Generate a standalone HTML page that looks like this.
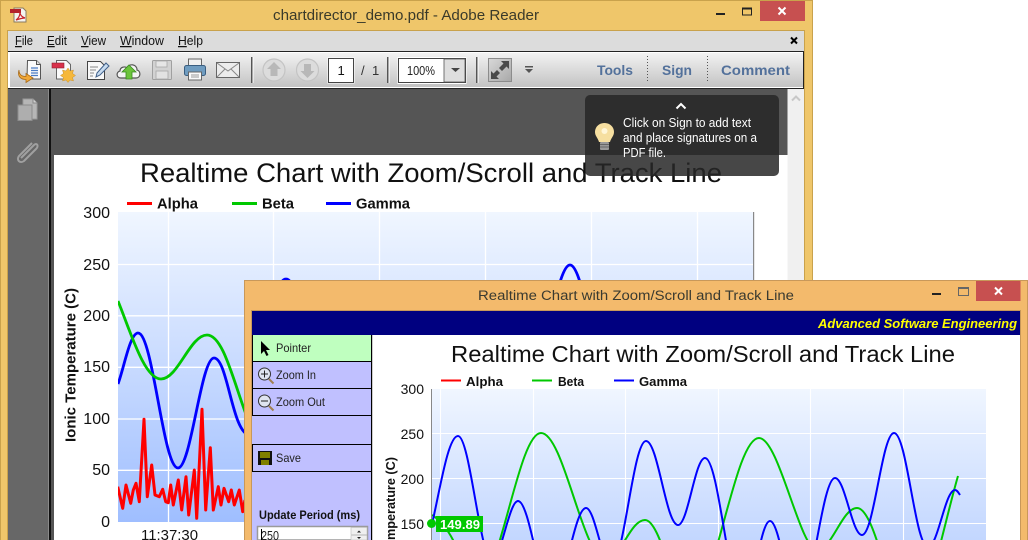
<!DOCTYPE html>
<html><head><meta charset="utf-8"><style>
html,body{margin:0;padding:0;background:#fff;width:1028px;height:540px;overflow:hidden}
svg{display:block;overflow:hidden}
text{font-family:"Liberation Sans",sans-serif;white-space:pre}
.b{font-weight:bold}
.n{text-anchor:end;font-size:16px;fill:#111}
.m{text-anchor:end;font-size:14px;fill:#111}
.ui{font-size:12.5px;fill:#111}
.tip{font-size:12.5px;fill:#fff}
</style></head><body>
<svg width="1028" height="540" viewBox="0 0 1028 540" xmlns="http://www.w3.org/2000/svg">
<defs>
<linearGradient id="tb" x1="0" y1="0" x2="0" y2="1"><stop offset="0" stop-color="#f2f2f2"/><stop offset="1" stop-color="#c3c3c3"/></linearGradient>
<linearGradient id="ex" x1="0" y1="0" x2="1" y2="1"><stop offset="0" stop-color="#d8d8d8"/><stop offset="1" stop-color="#a8a8a8"/></linearGradient>
<linearGradient id="g1" gradientUnits="userSpaceOnUse" x1="0" y1="212" x2="0" y2="522"><stop offset="0" stop-color="#f0f6ff"/><stop offset="1" stop-color="#9fbeff"/></linearGradient>
<linearGradient id="g2" gradientUnits="userSpaceOnUse" x1="0" y1="389" x2="0" y2="659"><stop offset="0" stop-color="#f0f6ff"/><stop offset="1" stop-color="#9fbeff"/></linearGradient>
<clipPath id="c1"><rect x="118" y="212" width="636" height="310"/></clipPath>
<clipPath id="c2"><rect x="432" y="389" width="554" height="151"/></clipPath>
</defs>
<rect width="1028" height="540" fill="#fff"/>

<!-- back window -->
<rect x="0" y="0" width="812.5" height="540" fill="#efc66a"/>
<rect x="0" y="0" width="812.5" height="1" fill="#c9a24c"/>
<rect x="0" y="0" width="1" height="540" fill="#c9a24c"/>
<rect x="812" y="0" width="1" height="280" fill="#c9a24c"/>
<text x="273" y="20" font-size="14.5" fill="#3a3a2a" textLength="266" lengthAdjust="spacingAndGlyphs">chartdirector_demo.pdf - Adobe Reader</text>
<!-- pdf icon -->
<path d="M14 8h9l3 3v11H14z" fill="#f4f4f0" stroke="#8a7a60" stroke-width="1"/>
<rect x="10" y="9" width="11" height="4" fill="#b3222a"/>
<path d="M16 20c3-2 4-5 4-8 0 3 2 5 5 6-3 0-6 1-9 2z" fill="none" stroke="#c8202a" stroke-width="1.2"/>
<!-- controls -->
<rect x="716" y="13" width="9" height="2" fill="#222"/>
<rect x="742.500" y="8.500" width="9" height="6.500" fill="none" stroke="#222" stroke-width="1"/>
<rect x="742" y="7.500" width="10" height="2" fill="#222"/>
<rect x="760" y="1" width="45" height="20" fill="#c75050"/>
<path d="M778.500 7.500l7 7M785.500 7.500l-7 7" stroke="#fff" stroke-width="2"/>

<!-- client -->
<rect x="8" y="30" width="796" height="510" fill="#555"/>
<rect x="7" y="30" width="798" height="1" fill="#c9a24c"/>
<rect x="7" y="30" width="1" height="510" fill="#c9a24c"/>
<rect x="804" y="30" width="1" height="250" fill="#c9a24c"/>
<rect x="8" y="31" width="796" height="20" fill="#dcdcdc"/>
<g class="ui">
<text x="15" y="45" class="ui" textLength="18" lengthAdjust="spacingAndGlyphs"><tspan text-decoration="underline">F</tspan>ile</text>
<text x="47" y="45" class="ui" textLength="20" lengthAdjust="spacingAndGlyphs"><tspan text-decoration="underline">E</tspan>dit</text>
<text x="81" y="45" class="ui" textLength="25" lengthAdjust="spacingAndGlyphs"><tspan text-decoration="underline">V</tspan>iew</text>
<text x="120" y="45" class="ui" textLength="44" lengthAdjust="spacingAndGlyphs"><tspan text-decoration="underline">W</tspan>indow</text>
<text x="178" y="45" class="ui" textLength="25" lengthAdjust="spacingAndGlyphs"><tspan text-decoration="underline">H</tspan>elp</text>
</g>
<path d="M791 37.500l6 6M797 37.500l-6 6" stroke="#000" stroke-width="2"/>

<!-- toolbar -->
<rect x="8" y="51" width="796" height="38" fill="#222"/>
<rect x="8" y="52" width="795" height="36" fill="#fff"/>
<rect x="10" y="53" width="793" height="34" fill="url(#tb)"/>

<!-- icon 1 -->
<path d="M27.500 60.500h9l4 4v14.500h-13.500z" fill="#fafafa" stroke="#555"/>
<path d="M36.500 60.500v4h4" fill="#ddd" stroke="#555"/>
<path d="M31 68h7M31 70.500h7M31 73h7M31 75.500h7" stroke="#4a7cc4" stroke-width="1.200"/>
<path d="M19 70c0 5 3 6.500 7 6.500v-3l7 4.500-7 4.500v-3c-5 0-9-3-7-9.500z" fill="#f0a838" stroke="#a86a18" stroke-width=".8"/>
<!-- icon 2 -->
<path d="M56.500 60.500h10l4 4v14.500H56.500z" fill="#fafafa" stroke="#666"/>
<rect x="52" y="63" width="12" height="5" fill="#d8304a" stroke="#902030" stroke-width=".6"/>
<path d="M68 68l2 3 3.500-1-1 3.500 3 2-3 2 1 3.500-3.500-1-2 2.500-2-2.500-3.500 1 1-3.500-3-2 3-2-1-3.500 3.500 1z" fill="#f6b83a" stroke="#c89030" stroke-width=".5"/>
<!-- icon 3 -->
<path d="M87.500 61.500h13l4 4v14h-17z" fill="#f8f8f8" stroke="#444"/>
<path d="M90 67h8M90 70h6M90 73h4M90 76h3" stroke="#888"/>
<path d="M96 77l1-4 9-10 3 3-9 9z" fill="#c8dcf0" stroke="#40608a" stroke-width="1"/>
<!-- icon 4 -->
<path d="M121 78c-5 0-5-6-1-7 0-4 5-5 7-3 2-5 10-4 10 2 4 1 4 8-1 8z" fill="#f4f4f4" stroke="#555" stroke-width="1.200"/>
<path d="M129 65l7 7h-4v7h-6v-7h-4z" fill="#6cc43c" stroke="#3a8a20" stroke-width=".8"/>
<!-- icon 5 -->
<rect x="152.500" y="60.500" width="19" height="19" rx="1" fill="#d2d2d2" stroke="#a0a0a0"/>
<rect x="156" y="61" width="11" height="6" fill="#e6e6e6" stroke="#a8a8a8" stroke-width=".8"/>
<rect x="156" y="71" width="12" height="8" fill="#e2e2e2" stroke="#a8a8a8" stroke-width=".8"/>
<!-- icon 6 -->
<rect x="188.500" y="59" width="13" height="7" fill="#f0f0f0" stroke="#666"/>
<rect x="184.500" y="65.500" width="21" height="10" rx="2" fill="#6f9cc0" stroke="#3a5e80"/>
<rect x="188.500" y="72" width="13" height="8" fill="#fafafa" stroke="#666"/>
<path d="M191 75h8M191 77h8" stroke="#999"/>
<!-- icon 7 -->
<rect x="216.500" y="62.500" width="23" height="15" fill="#ececec" stroke="#666"/>
<path d="M217 63l11 8 11-8M217 77l8-8M239 77l-8-8" fill="none" stroke="#888"/>

<rect x="251" y="57" width="1.500" height="26" fill="#555"/>
<rect x="252.500" y="57" width="1" height="26" fill="#fff"/>

<circle cx="274" cy="70" r="11" fill="#dcdcdc" stroke="#c4c4c4" stroke-width="1.200"/>
<path d="M274 62l7 7h-3.500v7h-7v-7H267z" fill="#b8b8b8"/>
<circle cx="307.500" cy="70" r="11" fill="#dcdcdc" stroke="#c4c4c4" stroke-width="1.200"/>
<path d="M307.500 78l-7-7h3.500v-7h7v7h3.500z" fill="#b8b8b8"/>

<rect x="327.500" y="57.500" width="27" height="26" fill="#fff"/>
<rect x="328.500" y="58.500" width="25" height="24" fill="#fff" stroke="#444"/>
<text x="337.500" y="75" font-size="13" fill="#111">1</text>
<text x="361" y="75" font-size="13" fill="#333">/</text>
<text x="372" y="75" font-size="13" fill="#333">1</text>
<rect x="387" y="57" width="1.500" height="26" fill="#555"/>
<rect x="388.500" y="57" width="1" height="26" fill="#fff"/>
<rect x="397.500" y="57" width="69" height="27" fill="#fff"/>
<rect x="398.500" y="58.500" width="67" height="24" fill="#fff" stroke="#444"/>
<rect x="444" y="59" width="21" height="23" fill="#dedede" stroke="#555" stroke-width=".8"/>
<text x="407" y="75" font-size="13" fill="#222" textLength="28" lengthAdjust="spacingAndGlyphs">100%</text>
<path d="M451 68h9l-4.500 4z" fill="#444"/>
<rect x="476" y="57" width="1.500" height="26" fill="#555"/>
<rect x="477.500" y="57" width="1" height="26" fill="#fff"/>
<rect x="488.500" y="58.500" width="23" height="23" fill="url(#ex)" stroke="#8c8c8c"/>
<path d="M509 61h-8l2.500 2.500-4.500 4.500 3 3 4.500-4.500 2.500 2.500z" fill="#4a4a4a"/>
<path d="M491 79h8l-2.500-2.500 3.500-3.500-3-3-3.500 3.500-2.500-2.500z" fill="#4a4a4a"/>
<path d="M525 66h8v1.500h-8zM525 69h8l-4 4z" fill="#555"/>
<text x="597" y="75" font-size="14" class="b" fill="#53719b" textLength="36" lengthAdjust="spacingAndGlyphs">Tools</text>
<path d="M647.500 56v26M707.500 56v26" stroke="#555" stroke-dasharray="1 2"/>
<text x="662" y="75" font-size="14" class="b" fill="#53719b" textLength="30" lengthAdjust="spacingAndGlyphs">Sign</text>
<text x="721" y="75" font-size="14" class="b" fill="#53719b" textLength="69" lengthAdjust="spacingAndGlyphs">Comment</text>

<!-- sidebar -->
<rect x="8" y="89" width="40" height="451" fill="#676767"/>
<rect x="48" y="89" width="1" height="451" fill="#8a8a8a"/>
<rect x="49" y="89" width="2" height="451" fill="#111"/>
<path d="M23 99h10l4 4v16H23z" fill="#b6b6b6" stroke="#999"/>
<path d="M33 99v4h4" fill="#d0d0d0" stroke="#888"/>
<path d="M18 105h14v15.500H18z" fill="#aeaeae" stroke="#8c8c8c"/>
<path d="M21 158L34 145C37 142 39 146 36 149L24 161C20 164 16 160 19 156L32 143" fill="none" stroke="#a0a0a0" stroke-width="2"/>

<!-- doc page -->
<rect x="54" y="155" width="734" height="385" fill="#fff"/>
<rect x="787.500" y="89" width="16.500" height="451" fill="#f0f0f0"/>
<path d="M792 100.500l4-4 4 4" fill="none" stroke="#c8c8c8" stroke-width="2"/>

<!-- back chart -->
<text x="140" y="182" font-size="27" fill="#111" textLength="582" lengthAdjust="spacingAndGlyphs">Realtime Chart with Zoom/Scroll and Track Line</text>
<rect x="127" y="202" width="25" height="3" fill="#f00"/>
<text x="157" y="208.500" font-size="14.500" class="b" fill="#111" textLength="41" lengthAdjust="spacingAndGlyphs">Alpha</text>
<rect x="232" y="202" width="25" height="3" fill="#00c800"/>
<text x="262" y="208.500" font-size="14.500" class="b" fill="#111" textLength="32" lengthAdjust="spacingAndGlyphs">Beta</text>
<rect x="326" y="202" width="25" height="3" fill="#00f"/>
<text x="356" y="208.500" font-size="14.500" class="b" fill="#111" textLength="54" lengthAdjust="spacingAndGlyphs">Gamma</text>
<rect x="118" y="212" width="635" height="310" fill="url(#g1)"/>
<path d="M118 264.500H753M118 315.800H753M118 367.300H753M118 419H753M118 470.300H753M168.500 212V522M273.500 212V522M379.500 212V522M485.500 212V522M591.500 212V522M697.500 212V522" stroke="#fff" stroke-width="1.300"/>
<rect x="753" y="212" width="1.200" height="310" fill="#888"/>
<g clip-path="url(#c1)" fill="none" stroke-width="2.800" stroke-linejoin="round">
<path d="M117.700 486.700L122.700 508.300 126 485 130.700 503.300 133.300 490 136 483.300 139.300 501.700 144 419.300 147.300 496.700 151.700 465 155 495 159.300 496.700 162.700 489.300 165.700 501.700 168.300 502.700 170.700 485 173.300 505 178.300 480 181.700 510 186 476.700 188.700 515 194.300 470 196.700 518.300 202 409.300 205.700 510 210.300 447.700 213.300 510 218.300 486.700 221 505 224 488.300 228.700 501.700 231.300 490 234.300 505 239.300 490 242.700 511.700 245 500" stroke="#f00" stroke-width="3"/>
<path d="M118 384C124 368 130 333 138 333C153 333 163 468 178 468C191 468 201 358 214 358C228 358 232 435 250 435" stroke="#00f"/>
<path d="M276 295C279 285 282 279 286 279C290 279 293 285 296 295" stroke="#00f"/>
<path d="M555 300C560 280 565 265 570 265C575 265 580 280 585 300" stroke="#00f"/>
<path d="M118 301C130 330 144 379 161 379C178 379 190 335 207 335C224 335 234 385 250 425" stroke="#00c800"/>
</g>
<g font-size="16">
<text class="n" x="110" y="218">300</text><text class="n" x="110" y="270">250</text><text class="n" x="110" y="321">200</text><text class="n" x="110" y="372">150</text><text class="n" x="110" y="424">100</text><text class="n" x="110" y="475">50</text><text class="n" x="110" y="527">0</text>
</g>
<text transform="translate(75.500 442) rotate(-90)" font-size="14.500" class="b" fill="#111" textLength="154" lengthAdjust="spacingAndGlyphs">Ionic Temperature (C)</text>
<text x="141" y="540" font-size="14.500" fill="#111" textLength="57" lengthAdjust="spacingAndGlyphs">11:37:30</text>

<!-- tooltip -->
<rect x="585" y="95" width="194" height="81" rx="5" fill="#272727" fill-opacity=".85"/>
<path d="M676.500 108.500l4.500-4.500 4.500 4.500" fill="none" stroke="#fff" stroke-width="2"/>
<text class="tip" x="623" y="127" textLength="128" lengthAdjust="spacingAndGlyphs">Click on Sign to add text</text>
<text class="tip" x="623" y="142" textLength="134" lengthAdjust="spacingAndGlyphs">and place signatures on a</text>
<text class="tip" x="623" y="157" textLength="43" lengthAdjust="spacingAndGlyphs">PDF file.</text>
<path d="M604.500 123c5.500 0 9.500 4 9.500 9 0 4-3 6-4 10h-11c-1-4-4-6-4-10 0-5 4-9 9.500-9z" fill="#f6dfa0"/>
<circle cx="604.500" cy="131" r="3" fill="#fff6d8"/>
<rect x="600" y="142" width="9" height="8" rx="1" fill="#9a9a9a"/>
<path d="M600 144.500h9M600 147h9" stroke="#666"/>

<!-- front window -->
<rect x="244" y="280" width="784" height="260" fill="#f3ba6c"/>
<path d="M244.500 540V280.500H1028" fill="none" stroke="#c8985a"/>
<rect x="1027" y="281" width="1" height="259" fill="#c8985a"/>
<text x="478" y="300" font-size="13.500" fill="#3a3a30" textLength="316" lengthAdjust="spacingAndGlyphs">Realtime Chart with Zoom/Scroll and Track Line</text>
<rect x="932" y="293" width="9" height="2" fill="#222"/>
<rect x="958.500" y="287.500" width="10" height="8" fill="none" stroke="#666"/>
<rect x="958" y="287" width="11" height="2" fill="#666"/>
<rect x="976" y="281" width="44.500" height="20" fill="#c75050"/>
<path d="M995 287.500l7 7M1002 287.500l-7 7" stroke="#fff" stroke-width="2"/>
<rect x="251" y="310" width="770" height="230" fill="#c8985a"/>
<rect x="252" y="311" width="768" height="229" fill="#fff"/>
<rect x="252" y="311" width="768" height="24" fill="#000080"/>
<text x="818" y="328" font-size="13" font-weight="bold" font-style="italic" fill="#ffff00" textLength="199" lengthAdjust="spacingAndGlyphs">Advanced Software Engineering</text>

<!-- left panel -->
<rect x="252" y="335" width="119" height="205" fill="#c0c0ff"/>
<rect x="253" y="335" width="118" height="26" fill="#bfffbf"/>
<rect x="371" y="335" width="1.200" height="205" fill="#000"/>
<path d="M252 361.500H371M252 388.500H371M252 415.500H371M252 444.500H371M252 471.500H371M252.500 335V415.500M252.500 444.500V471.500" stroke="#000" stroke-width="1"/>
<path d="M261 341v13l3-3 2.500 5 2-1-2.500-5h4z" fill="#000"/>
<text x="276" y="352" font-size="12" fill="#222" textLength="35" lengthAdjust="spacingAndGlyphs">Pointer</text>
<text x="276" y="379" font-size="12" fill="#222" textLength="40" lengthAdjust="spacingAndGlyphs">Zoom In</text>
<text x="276" y="406" font-size="12" fill="#222" textLength="49" lengthAdjust="spacingAndGlyphs">Zoom Out</text>
<text x="276" y="462" font-size="12" fill="#222" textLength="25" lengthAdjust="spacingAndGlyphs">Save</text>
<circle cx="264.500" cy="374" r="6" fill="#dfe4f0" stroke="#333"/>
<path d="M261 374h7M264.500 370.500v7" stroke="#222"/>
<path d="M269 379l4.500 4.500" stroke="#a08050" stroke-width="2"/>
<circle cx="264.500" cy="401" r="6" fill="#dfe4f0" stroke="#333"/>
<path d="M261 401h7" stroke="#222"/>
<path d="M269 406l4.500 4.500" stroke="#a08050" stroke-width="2"/>
<rect x="258" y="451" width="14" height="14" fill="#111"/>
<rect x="260" y="452" width="10" height="6" fill="#808000"/>
<rect x="261" y="460" width="8" height="5" fill="#808000"/>
<text x="259" y="519" font-size="11.500" class="b" fill="#111" textLength="101" lengthAdjust="spacingAndGlyphs">Update Period (ms)</text>
<rect x="257.500" y="526.500" width="110" height="13.500" fill="#fff" stroke="#9a9a9a" stroke-width="1.500"/>
<text x="261" y="540" font-size="12.500" fill="#222" textLength="18" lengthAdjust="spacingAndGlyphs">250</text>
<rect x="261" y="529" width="1" height="11" fill="#000"/>
<rect x="351" y="527.500" width="16" height="7" fill="#f0f0f0" stroke="#bbb" stroke-width=".6"/>
<rect x="351" y="535.500" width="16" height="4.500" fill="#f0f0f0" stroke="#bbb" stroke-width=".6"/>
<path d="M357 532.500h4l-2-2z" fill="#222"/>
<path d="M357 537h4l-2 2z" fill="#222"/>

<!-- front chart -->
<text x="451" y="362" font-size="23.500" fill="#111" textLength="504" lengthAdjust="spacingAndGlyphs">Realtime Chart with Zoom/Scroll and Track Line</text>
<rect x="441" y="379.500" width="20" height="2" fill="#f00"/>
<text x="466" y="386" font-size="12.500" class="b" fill="#111" textLength="37" lengthAdjust="spacingAndGlyphs">Alpha</text>
<rect x="532" y="379.500" width="20" height="2" fill="#00c800"/>
<text x="558" y="386" font-size="12.500" class="b" fill="#111" textLength="26" lengthAdjust="spacingAndGlyphs">Beta</text>
<rect x="614" y="379.500" width="20" height="2" fill="#00f"/>
<text x="639" y="386" font-size="12.500" class="b" fill="#111" textLength="48" lengthAdjust="spacingAndGlyphs">Gamma</text>
<rect x="432" y="389" width="554" height="151" fill="url(#g2)"/>
<rect x="431" y="389" width="1" height="151" fill="#888"/>
<path d="M432 433.500H986M432 478.500H986M432 523.500H986M440.500 389V540M533.500 389V540M625.500 389V540M718.500 389V540M810.500 389V540M903.500 389V540" stroke="#fff" stroke-width="1.100"/>
<g clip-path="url(#c2)" fill="none" stroke-width="2">
<path d="M432 515C440 520 448 530 453 540C460 560 465 583 477 583C500 583 518 433 541 433C564 433 583 560 606 560C620 560 630 520 645 520C661 520 674 600 690 600C715 600 734 438 759 438C779 438 800 550 817 550C832 550 842 508 857 508C877 508 892 620 912 620C925 620 945 520 958 476" stroke="#00c800"/>
<path d="M432 524C440 490 448 436 458 436C470 436 480 560 492 560C501 560 509 501 518 501C530 501 540 596 552 596C564 596 574 508 586 508C595 508 602 565 611 565C624 565 633 441 646 441C658 441 666 525 678 525C688 525 695 458 705 458C719 458 729 600 743 600C753 600 760 521 770 521C780 521 788 600 799 600C812 600 822 478 835 478C845 478 852 535 862 535C874 535 882 433 894 433C907 433 915 547 928 547C938 547 945 490 955 490C957 490 958 492 960 495" stroke="#00f"/>
</g>
<g>
<text class="m" x="424" y="394">300</text><text class="m" x="424" y="439">250</text><text class="m" x="424" y="484">200</text><text class="m" x="424" y="529">150</text>
</g>
<text transform="translate(395 540) rotate(-90)" font-size="13" class="b" fill="#111" textLength="83" lengthAdjust="spacingAndGlyphs">mperature (C)</text>
<circle cx="431.500" cy="523.500" r="4.500" fill="#00c800"/>
<rect x="436" y="516" width="47" height="16" fill="#00c800"/>
<text x="440" y="529" font-size="13" class="b" fill="#fff" textLength="40" lengthAdjust="spacingAndGlyphs">149.89</text>
</svg>
</body></html>
